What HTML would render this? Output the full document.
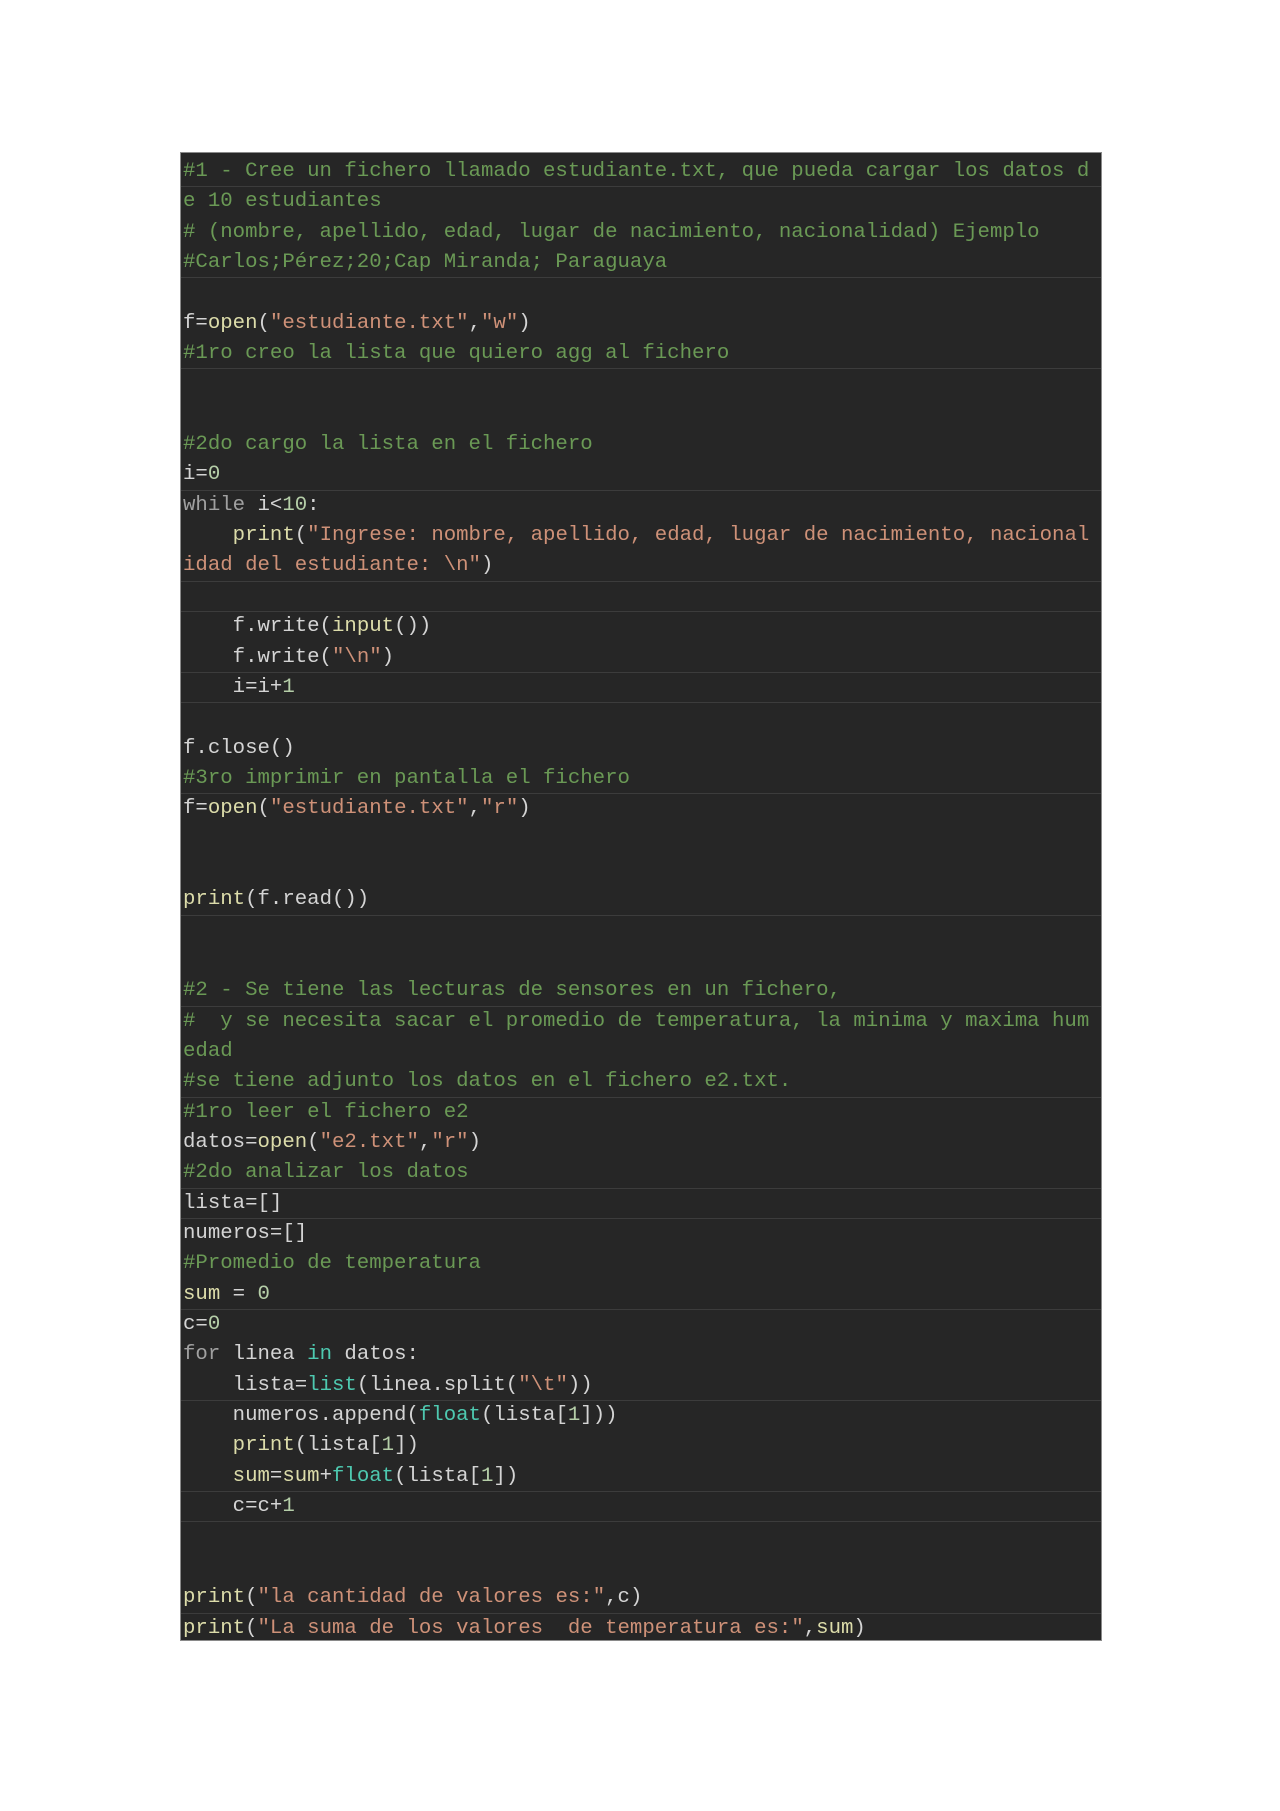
<!DOCTYPE html>
<html><head><meta charset="utf-8"><style>
html,body{margin:0;padding:0;background:#fff;width:1280px;height:1811px;overflow:hidden}
#box{position:absolute;left:180px;top:152px;width:920px;height:1487px;background:#262626;border:1px solid #8a8a8a;box-sizing:content-box}
.l{height:30.35px;line-height:30.35px;font-family:"Liberation Mono",monospace;font-size:20.7px;color:#d4d4d4;white-space:pre;padding-left:2px;box-sizing:border-box;letter-spacing:0px}
.l>span.w{position:relative;top:4px}
.l{position:relative}
.in{position:relative;top:4px}
.b{border-bottom:1px solid #3c3c3c}
.c{color:#6a9955}.s{color:#ce9178}.f{color:#dcdcaa}.k{color:#a0a0a0}.t{color:#4ec9b0}.n{color:#b5cea8}
</style></head><body><div id="box"><div class="in">
<div class="l b"><span class="c">#1 - Cree un fichero llamado estudiante.txt, que pueda cargar los datos d</span></div>
<div class="l"><span class="c">e 10 estudiantes</span></div>
<div class="l"><span class="c"># (nombre, apellido, edad, lugar de nacimiento, nacionalidad) Ejemplo</span></div>
<div class="l b"><span class="c">#Carlos;Pérez;20;Cap Miranda; Paraguaya</span></div>
<div class="l"> </div>
<div class="l">f=<span class="f">open</span>(<span class="s">"estudiante.txt"</span>,<span class="s">"w"</span>)</div>
<div class="l b"><span class="c">#1ro creo la lista que quiero agg al fichero</span></div>
<div class="l"> </div>
<div class="l"> </div>
<div class="l"><span class="c">#2do cargo la lista en el fichero</span></div>
<div class="l b">i=<span class="n">0</span></div>
<div class="l"><span class="k">while</span> i&lt;<span class="n">10</span>:</div>
<div class="l">    <span class="f">print</span>(<span class="s">"Ingrese: nombre, apellido, edad, lugar de nacimiento, nacional</span></div>
<div class="l b"><span class="s">idad del estudiante: \n"</span>)</div>
<div class="l b"> </div>
<div class="l">    f.write(<span class="f">input</span>())</div>
<div class="l b">    f.write(<span class="s">"\n"</span>)</div>
<div class="l b">    i=i+<span class="n">1</span></div>
<div class="l"> </div>
<div class="l">f.close()</div>
<div class="l b"><span class="c">#3ro imprimir en pantalla el fichero</span></div>
<div class="l">f=<span class="f">open</span>(<span class="s">"estudiante.txt"</span>,<span class="s">"r"</span>)</div>
<div class="l"> </div>
<div class="l"> </div>
<div class="l b"><span class="f">print</span>(f.read())</div>
<div class="l"> </div>
<div class="l"> </div>
<div class="l b"><span class="c">#2 - Se tiene las lecturas de sensores en un fichero,</span></div>
<div class="l"><span class="c">#  y se necesita sacar el promedio de temperatura, la minima y maxima hum</span></div>
<div class="l"><span class="c">edad</span></div>
<div class="l b"><span class="c">#se tiene adjunto los datos en el fichero e2.txt.</span></div>
<div class="l"><span class="c">#1ro leer el fichero e2</span></div>
<div class="l">datos=<span class="f">open</span>(<span class="s">"e2.txt"</span>,<span class="s">"r"</span>)</div>
<div class="l b"><span class="c">#2do analizar los datos</span></div>
<div class="l b">lista=[]</div>
<div class="l">numeros=[]</div>
<div class="l"><span class="c">#Promedio de temperatura</span></div>
<div class="l b"><span class="f">sum</span> = <span class="n">0</span></div>
<div class="l">c=<span class="n">0</span></div>
<div class="l"><span class="k">for</span> linea <span class="t">in</span> datos:</div>
<div class="l b">    lista=<span class="t">list</span>(linea.split(<span class="s">"\t"</span>))</div>
<div class="l">    numeros.append(<span class="t">float</span>(lista[<span class="n">1</span>]))</div>
<div class="l">    <span class="f">print</span>(lista[<span class="n">1</span>])</div>
<div class="l b">    <span class="f">sum</span>=<span class="f">sum</span>+<span class="t">float</span>(lista[<span class="n">1</span>])</div>
<div class="l b">    c=c+<span class="n">1</span></div>
<div class="l"> </div>
<div class="l"> </div>
<div class="l b"><span class="f">print</span>(<span class="s">"la cantidad de valores es:"</span>,c)</div>
<div class="l"><span class="f">print</span>(<span class="s">"La suma de los valores  de temperatura es:"</span>,<span class="f">sum</span>)</div>
</div></div></body></html>
